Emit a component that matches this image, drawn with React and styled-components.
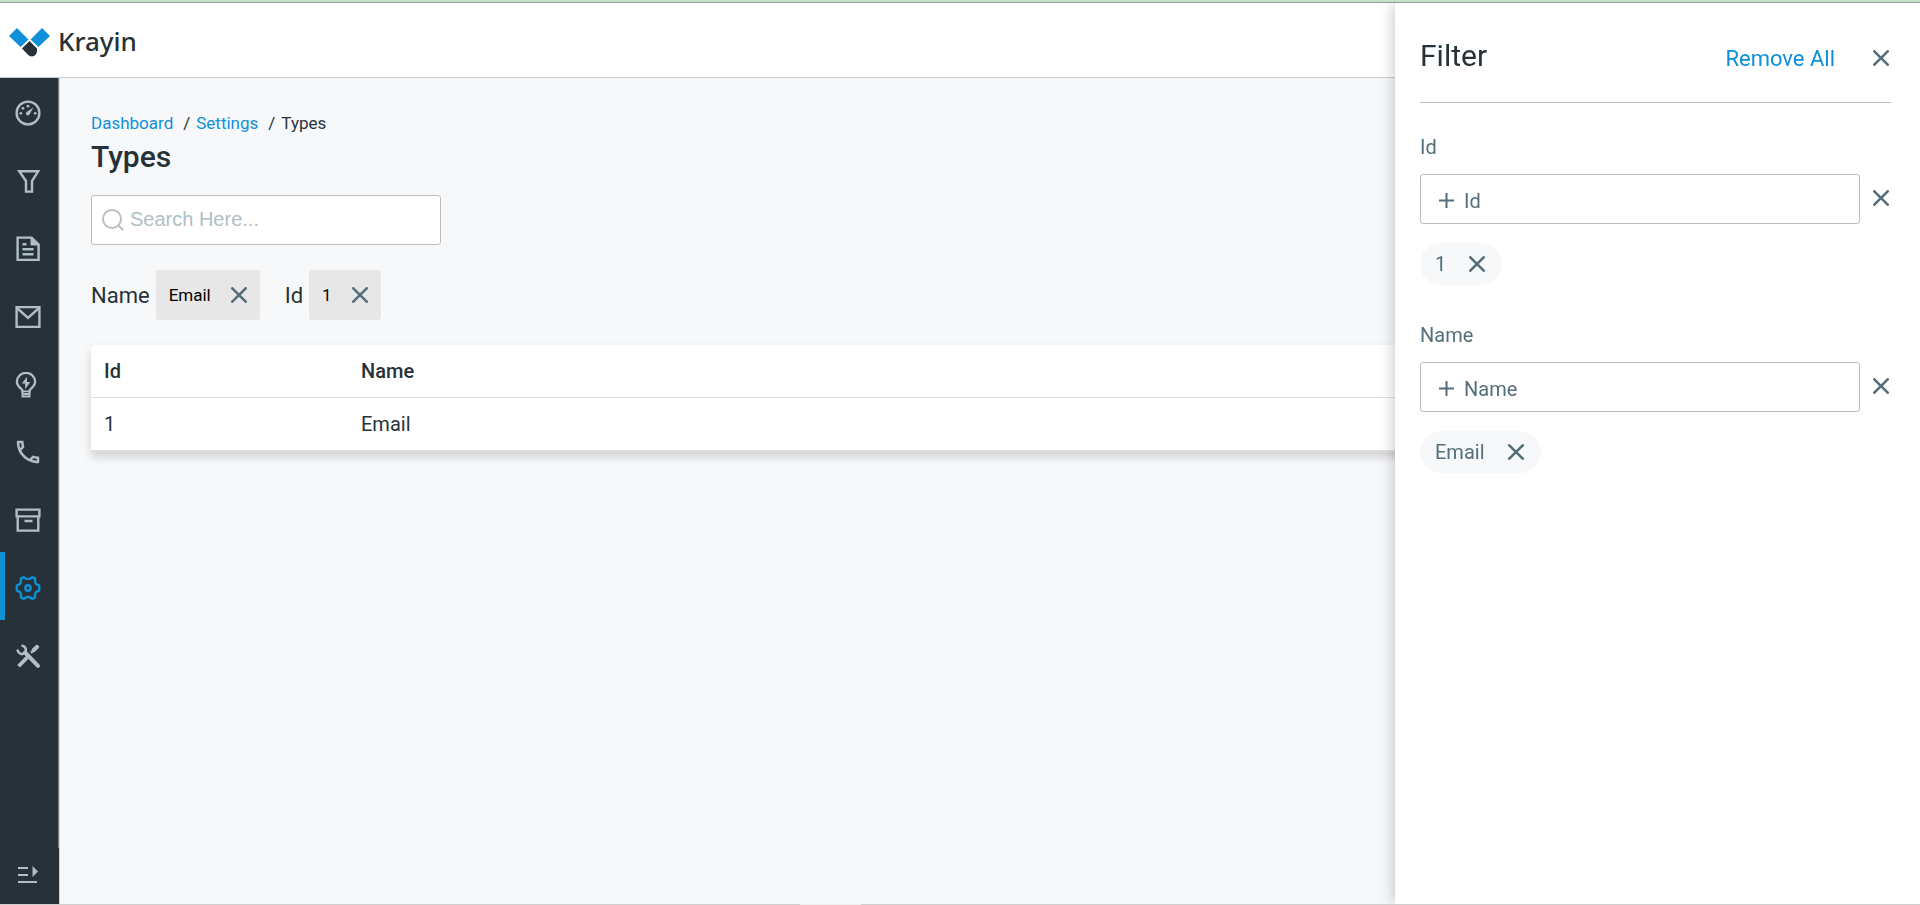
import React, { useState } from 'react';
import styled, { createGlobalStyle } from 'styled-components';
import { MdOutlineLocalPhone } from 'react-icons/md';

const CloseIcon = () => (
  <svg width='16' height='16' viewBox='0 0 16 16' aria-hidden='true'>
    <path d='M1.3 1.3l13.4 13.4M14.7 1.3L1.3 14.7' stroke='#546e7a' strokeWidth='2.6' strokeLinecap='round' />
  </svg>
);

const PlusIcon = () => (
  <svg width='15' height='15' viewBox='0 0 15 15' aria-hidden='true'>
    <path d='M7.5 0v15M0 7.5h15' stroke='#546e7a' strokeWidth='2' />
  </svg>
);

const SearchIcon = () => (
  <svg width='22' height='22' viewBox='0 0 22 22' aria-hidden='true' fill='none' stroke='#bdbdbd' strokeWidth='2'>
    <circle cx='10' cy='10' r='9' />
    <path d='M16.5 16.5l4.5 4.5' />
  </svg>
);

const LogoMark = () => (
  <svg width='41' height='29' viewBox='0 0 41 29' aria-hidden='true'>
    <path d='M0 8L8 0l11.4 11.4-7.8 7.6zM41 8l-8-8-11.4 11.4 7.8 7.6z' fill='#0e90d9' />
    <path d='M20.5 13l7.5 7.5v2.3c0 3.5-2.4 5.6-5 5.6-1.7 0-2.9-.6-4-1.7L13 20.6z' fill='#263238' />
  </svg>
);

const DashboardIcon = () => (
  <svg width='26' height='26' viewBox='0 0 26 26'>
    <circle cx='13' cy='13' r='11.4' fill='none' stroke='currentColor' strokeWidth='2.4' />
    <g fill='currentColor'>
      <circle cx='5.8' cy='13.3' r='1.4' />
      <circle cx='8' cy='8.3' r='1.4' />
      <circle cx='13' cy='6.2' r='1.4' />
      <circle cx='20.2' cy='13.3' r='1.4' />
      <path d='M18.6 7.2l-4.2 7.2c-.8 1.2-2.3 1.2-3 .3-.8-1-.5-2.2.5-3z' />
    </g>
  </svg>
);

const LeadsIcon = () => (
  <svg width='26' height='26' viewBox='0 0 26 26' fill='none' stroke='currentColor' strokeWidth='2.4'>
    <path d='M4.200 3.200h19L17 13v10.600h-6V13z' />
  </svg>
);

const QuotesIcon = () => (
  <svg width='26' height='26' viewBox='0 0 26 26' fill='none' stroke='currentColor' strokeWidth='2.4'>
    <path d='M2.6 1.6h14l7 7v15.3h-21z' />
    <path d='M16 1.6v7.4h7.6z' fill='currentColor' strokeWidth='1' />
    <path d='M7.5 8.2h4M7.5 13.2h11M7.5 18.2h11' />
  </svg>
);

const MailIcon = () => (
  <svg width='26' height='26' viewBox='0 0 26 26' fill='none' stroke='currentColor' strokeWidth='2.4'>
    <path d='M1.6 3.1h22.800v19.800H1.600z' />
    <path d='M2 4l11 10L24 4' />
  </svg>
);

const ActivitiesIcon = () => (
  <svg width='26' height='26' viewBox='0 0 26 26' fill='none' stroke='currentColor' strokeWidth='2.4'>
    <path d='M7.500 20.500v-2C7.100 17 1.900 14.600 1.900 9.800a9.100 8.900 0 0 1 18.200 0c0 4.800-5.200 7.200-5.600 8.700v2' />
    <path d='M7.400 19.300h7.200v5.200H7.400zM7.500 22h7' strokeWidth='1.8' />
    <path d='M12 4.800L6.800 11.600h3.300v5.600l5.200-7.200h-3.300z' fill='currentColor' stroke='none' />
  </svg>
);

const ProductsIcon = () => (
  <svg width='26' height='26' viewBox='0 0 26 26' fill='none' stroke='currentColor' strokeWidth='2.4'>
    <path d='M1.6 2.6h22.800v6.800H1.600zM2.700 9.400v14.200h20.600V9.400M9.500 14h8' />
  </svg>
);

const SettingsIcon = () => (
  <svg width='26' height='26' viewBox='0 0 26 26' fill='none' stroke='currentColor' strokeWidth='2.4' strokeLinejoin='round'>
    <path d='M24.2 10.500Q18.600 9.200 20.300 3.900L17.200 2.100Q13 5.900 8.800 2.100L5.700 3.900Q7.400 9.200 1.800 10.500V15.500Q7.400 16.800 5.700 22.100L8.800 23.900Q13 20.100 17.200 23.900L20.300 22.100Q18.600 16.800 24.200 15.500z' />
    <circle cx='13' cy='13' r='2.7' />
  </svg>
);

const ConfigIcon = () => (
  <svg width='26' height='26' viewBox='0 0 26 26' fill='none' stroke='currentColor'>
    <path d='M10 9.500l13 13.300' strokeWidth='4' strokeLinecap='round' />
    <path d='M7.500 2.700a4.300 4.300 0 0 1 2.200 7.200a4.300 4.300 0 0 1-7-2.400' strokeWidth='2.6' strokeLinecap='round' />
    <path d='M11 15.600L4.900 21.900' strokeWidth='3.8' strokeLinecap='square' />
    <path d='M16 9.800l3.500-3.500' strokeWidth='2.4' />
    <path d='M18.800 7l3.200-3.100' strokeWidth='4.2' strokeLinecap='round' />
  </svg>
);

const ExpandIcon = () => (
  <svg width='22' height='18' viewBox='0 0 22 18'>
    <path d='M0 2h10M0 9h10M0 16h19' stroke='currentColor' strokeWidth='2' />
    <path d='M14.5 0v11l5.500-5.500z' fill='currentColor' />
  </svg>
);

const menuItems = [
  { label: 'Dashboard', icon: <DashboardIcon /> },
  { label: 'Leads', icon: <LeadsIcon /> },
  { label: 'Quotes', icon: <QuotesIcon /> },
  { label: 'Mail', icon: <MailIcon /> },
  { label: 'Activities', icon: <ActivitiesIcon /> },
  { label: 'Contacts', icon: <MdOutlineLocalPhone size={30} /> },
  { label: 'Products', icon: <ProductsIcon /> },
  { label: 'Settings', icon: <SettingsIcon />, active: true },
  { label: 'Configuration', icon: <ConfigIcon /> },
];

const filters = [
  { key: 'id', label: 'Id', value: '1' },
  { key: 'name', label: 'Name', value: 'Email' },
];

const App = () => {
  const [search, setSearch] = useState('');

  return (
    <>
      <GlobalStyle />
      <Page>
        <TopStrip />
        <Header>
          <Logo href='#'>
            <LogoMark />
            <span>Krayin</span>
          </Logo>
        </Header>
        <Body>
          <Sidebar>
            <Nav>
              <MenuList>
                {menuItems.map((item) => (
                  <MenuItem key={item.label}>
                    <MenuLink href='#' $active={item.active} aria-label={item.label}>
                      {item.icon}
                    </MenuLink>
                  </MenuItem>
                ))}
              </MenuList>
            </Nav>
            <ExpandButton type='button' aria-label='Expand menu'>
              <ExpandIcon />
            </ExpandButton>
          </Sidebar>
          <Main>
            <Breadcrumbs>
              <li><a href='#'>Dashboard</a></li>
              <li><a href='#'>Settings</a></li>
              <li>Types</li>
            </Breadcrumbs>
            <Title>Types</Title>
            <SearchBox>
              <SearchIcon />
              <input
                type='search'
                aria-label='Search'
                placeholder='Search Here...'
                value={search}
                onChange={(e) => setSearch(e.target.value)}
              />
            </SearchBox>
            <AppliedFilters>
              {[...filters].reverse().map((filter) => (
                <AppliedFilter key={filter.key}>
                  {filter.label}
                  <FilterTag>
                    {filter.value}
                    <IconButton type='button' aria-label='Remove'>
                      <CloseIcon />
                    </IconButton>
                  </FilterTag>
                </AppliedFilter>
              ))}
            </AppliedFilters>
            <Table>
              <thead>
                <tr>
                  <th>Id</th>
                  <th>Name</th>
                </tr>
              </thead>
              <tbody>
                <tr>
                  <td>1</td>
                  <td>Email</td>
                </tr>
              </tbody>
            </Table>
          </Main>
        </Body>
        <BottomBar>
          <span />
        </BottomBar>
      </Page>
      <Drawer>
        <DrawerHeader>
          <h2>Filter</h2>
          <DrawerActions>
            <a href='#'>Remove All</a>
            <IconButton type='button' aria-label='Close'>
              <CloseIcon />
            </IconButton>
          </DrawerActions>
        </DrawerHeader>
        {filters.map((filter) => (
          <Field key={filter.key}>
            <FieldLabel id={`label-${filter.key}`}>{filter.label}</FieldLabel>
            <FieldRow>
              <AddButton type='button' aria-describedby={`label-${filter.key}`}>
                <PlusIcon />
                {filter.label}
              </AddButton>
              <IconButton type='button' aria-label='Clear'>
                <CloseIcon />
              </IconButton>
            </FieldRow>
            <Pill>
              {filter.value}
              <IconButton type='button' aria-label='Remove'>
                <CloseIcon />
              </IconButton>
            </Pill>
          </Field>
        ))}
      </Drawer>
    </>
  );
};

const GlobalStyle = createGlobalStyle`
  * {
    box-sizing: border-box;
  }
  body {
    margin: 0;
    font-family: Roboto, sans-serif;
    font-size: 20px;
    color: #263238;
    background: #f7f8fa;
  }
  a {
    color: #0e90d9;
    text-decoration: none;
  }
  svg {
    display: block;
    flex-shrink: 0;
  }
`;

const Page = styled.div`
  min-height: 100vh;
  display: flex;
  flex-direction: column;
`;

const TopStrip = styled.div`
  height: 3px;
  background: #c8e0c8;
  border-bottom: 1px solid #8fa391;
`;

const Header = styled.header`
  height: 75px;
  padding: 0 9px;
  display: flex;
  align-items: center;
  background: #fff;
  border-bottom: 1px solid #c7cbcd;
`;

const Logo = styled.a`
  display: flex;
  align-items: center;
  gap: 8px;
  padding-top: 4px;
  color: #263238;
  span {
    padding-bottom: 2px;
    font-family: 'Noto Sans', sans-serif;
    font-size: 26px;
    font-weight: 500;
    line-height: 28px;
  }
`;

const Body = styled.div`
  flex: 1;
  display: flex;
`;

const Sidebar = styled.aside`
  width: 60px;
  display: flex;
  flex-direction: column;
  background: #263238;
  border-right: 1px solid #d0d3d5;
`;

const Nav = styled.nav`
  flex: 1;
  display: flex;
  flex-direction: column;
  border-right: 1px solid #7b8386;
`;

const MenuList = styled.ul`
  flex: 1;
  max-height: 610px;
  margin: 0;
  padding: 0;
  list-style: none;
  display: flex;
  flex-direction: column;
`;

const MenuItem = styled.li`
  flex: 1;
  display: flex;
`;

const MenuLink = styled.a`
  flex: 1;
  display: flex;
  align-items: center;
  justify-content: center;
  color: ${({ $active }) => ($active ? '#0e90d9' : '#b0bec5')};
  border-left: 5px solid ${({ $active }) => ($active ? '#0e90d9' : 'transparent')};
  padding: 3px 8px 0 0;
`;

const ExpandButton = styled.button`
  height: 56px;
  padding: 0 0 2px 18px;
  display: flex;
  align-items: center;
  border: none;
  background: none;
  color: #b0bec5;
  cursor: pointer;
`;

const Main = styled.main`
  flex: 1;
  padding: 34px 31px;
`;

const Breadcrumbs = styled.ul`
  margin: 0;
  padding: 0;
  list-style: none;
  display: flex;
  font-size: 17px;
  line-height: 22px;
  li + li::before {
    content: '/';
    margin: 0 6px 0 10px;
  }
`;

const Title = styled.h1`
  margin: 5px 0 20px;
  font-size: 30px;
  font-weight: 500;
  line-height: 36px;
`;

const SearchBox = styled.div`
  width: 350px;
  height: 50px;
  padding: 0 10px;
  display: flex;
  align-items: center;
  gap: 6px;
  background: #fff;
  border: 1px solid #bdbdbd;
  border-radius: 3px;
  input {
    flex: 1;
    min-width: 0;
    padding: 0 0 2px;
    border: none;
    outline: none;
    background: none;
    font-family: 'Liberation Sans', sans-serif;
    font-size: 20px;
    color: #263238;
  }
  input::placeholder {
    color: #b0bec5;
  }
`;

const AppliedFilters = styled.div`
  margin: 25px 0;
  display: flex;
  gap: 25px;
`;

const AppliedFilter = styled.div`
  display: flex;
  align-items: center;
  gap: 6px;
  font-size: 22px;
`;

const IconButton = styled.button`
  padding: 0;
  border: none;
  background: none;
  cursor: pointer;
`;

const FilterTag = styled.span`
  height: 50px;
  padding: 0 13px;
  display: flex;
  align-items: center;
  gap: 20px;
  background: #e7e7e7;
  border-radius: 3px;
  font-size: 17px;
  color: #000;
`;

const Table = styled.table`
  width: 100%;
  table-layout: fixed;
  border-collapse: separate;
  border-spacing: 0;
  background: #fff;
  border-radius: 5px 5px 0 0;
  box-shadow: 0 5px 10px rgba(0, 0, 0, 0.16);
  th,
  td {
    height: 53px;
    padding: 0 13px;
    text-align: left;
    font-size: 20px;
    border-bottom: 1px solid #dedede;
  }
  th {
    font-weight: 500;
  }
  th:first-child {
    width: 257px;
  }
  td {
    height: 54px;
    border-bottom-width: 2px;
  }
`;

const BottomBar = styled.div`
  height: 1px;
  padding-left: 800px;
  background: #cfcfcf;
  span {
    display: block;
    width: 61px;
    height: 1px;
    background: #efefef;
  }
`;

const Drawer = styled.aside`
  position: fixed;
  top: 3px;
  right: 0;
  bottom: 1px;
  width: 525px;
  padding: 0 29px 0 25px;
  background: #fff;
  box-shadow: 0 0 15px rgba(0, 0, 0, 0.25);
  clip-path: inset(0 0 0 -30px);
`;

const DrawerHeader = styled.div`
  height: 100px;
  margin-bottom: 31px;
  padding-top: 5px;
  display: flex;
  align-items: center;
  justify-content: space-between;
  border-bottom: 1px solid #bdbdbd;
  h2 {
    margin: 0;
    font-size: 30px;
    font-weight: 400;
  }
`;

const DrawerActions = styled.div`
  display: flex;
  align-items: center;
  gap: 38px;
  padding: 6px 2px 0 0;
  font-size: 22px;
`;

const Field = styled.div`
  margin-bottom: 37px;
  color: #546e7a;
  font-size: 20px;
`;

const FieldLabel = styled.div`
  margin-bottom: 14px;
  line-height: 26px;
`;

const FieldRow = styled.div`
  display: flex;
  align-items: center;
  gap: 13px;
  margin-bottom: 19px;
  padding-right: 2px;
  > ${IconButton} {
    padding-bottom: 2px;
  }
`;

const AddButton = styled.button`
  flex: 1;
  height: 50px;
  padding: 3px 18px 0;
  display: flex;
  align-items: center;
  gap: 10px;
  background: #fff;
  border: 1px solid #bdbdbd;
  border-radius: 3px;
  font: inherit;
  color: inherit;
  cursor: pointer;
`;

const Pill = styled.span`
  width: fit-content;
  height: 42px;
  padding: 0 17px 0 15px;
  display: flex;
  align-items: center;
  gap: 23px;
  background: #f7f8fa;
  border-radius: 21px;
`;

export default App;
